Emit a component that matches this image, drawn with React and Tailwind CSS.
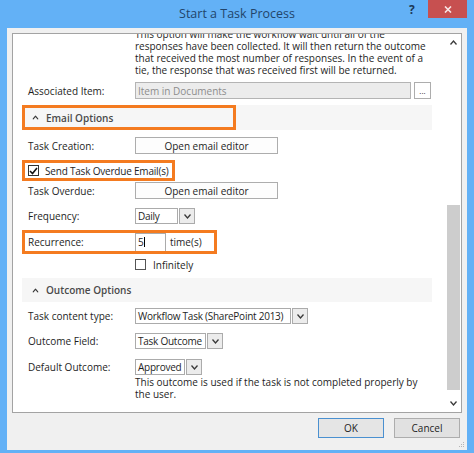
import React from "react";

// Pequeña flecha de los desplegables y de la barra de desplazamiento
const Chevron = ({ up = false, className = "" }) => (
  <svg width="7" height="5" viewBox="0 0 7 5" className={className}>
    <polyline
      points={up ? "0.5,4.5 3.5,1 6.5,4.5" : "0.5,0.5 3.5,4 6.5,0.5"}
      fill="none"
      stroke="#3a3a3a"
      strokeWidth="1.3"
    />
  </svg>
);

const Select = ({ text, width }) => (
  <div className="flex h-[16px]" style={{ width }}>
    <div className="flex-1 border border-[#ababab] bg-white flex items-center pl-[2px] leading-none whitespace-nowrap overflow-hidden tracking-[-0.25px]">
      {text}
    </div>
    <div className="w-[16px] border border-[#ababab] bg-[#ececec] ml-[1px] flex items-center justify-center">
      <Chevron />
    </div>
  </div>
);

const EditorButton = () => (
  <div className="w-[143px] h-[17px] border border-[#adadad] bg-[#fdfdfd] flex items-center justify-center leading-none">
    Open email editor
  </div>
);

const Label = ({ children }) => <div className="w-[107px] shrink-0 leading-none">{children}</div>;

const SectionHeader = ({ title, height, boxed }) => (
  <div className={`relative -ml-[6px] w-[410px] bg-[#f6f6f6] flex items-center pl-[10px] gap-[7px] ${height}`}>
    <Chevron up className="scale-90" />
    <span className="font-semibold text-[#4a4a4a] text-[10px] leading-none">{title}</span>
    {boxed && <div className="absolute inset-y-0 left-0 w-[214px] border-[3px] border-[#f47b20]"></div>}
  </div>
);

export default function App() {
  return (
    <div className="w-[474px] h-[453px] bg-[#63b1f6] flex flex-col font-['Open_Sans',sans-serif] text-[10px] text-[#1e1e1e] overflow-hidden">
      {/* Barra de título */}
      <div className="relative h-[28px] shrink-0 flex items-center justify-center">
        <span className="text-[12.5px] text-[#22456b] leading-none">Start a Task Process</span>
        <span className="absolute left-[409px] top-[4px] text-[12px] font-bold text-[#1c3857] leading-none">?</span>
        <div className="absolute right-[7px] top-0 w-[39px] h-[18px] bg-[#c75050] flex items-center justify-center">
          <svg width="8" height="7" viewBox="0 0 8 7">
            <path d="M1 0.5 L7 6.5 M7 0.5 L1 6.5" stroke="#f8e6e6" strokeWidth="1.6" />
          </svg>
        </div>
      </div>

      {/* Marco */}
      <div className="relative mx-[7px] mb-[3px] flex-1 bg-[#f0f0f0] flex flex-col px-[5px] pt-[5px]">
        <div className="h-[380px] shrink-0 border border-[#a3a3a3] bg-white flex overflow-hidden">
          <div className="flex-1 overflow-hidden pl-[15px]">
            <div className="-mt-[6px] ml-[107px] leading-[12px] w-[300px]">
              <div className="whitespace-nowrap">This option will make the workflow wait until all of the</div>
              <div className="whitespace-nowrap">responses have been collected. It will then return the outcome</div>
              <div className="whitespace-nowrap">that received the most number of responses. In the event of a</div>
              <div className="whitespace-nowrap">tie, the response that was received first will be returned.</div>
            </div>

            <div className="mt-[6px] h-[17px] flex items-center">
              <Label>Associated Item:</Label>
              <div className="w-[276px] h-[17px] border border-[#b4b4b4] bg-[#ececec] text-[#8c8c8c] flex items-center pl-[2px] leading-none">
                Item in Documents
              </div>
              <div className="ml-[3px] w-[17px] h-[17px] border border-[#adadad] bg-white flex items-end justify-center pb-[3px] text-[8px] leading-none">
                ...
              </div>
            </div>

            <div className="mt-[6px]">
              <SectionHeader title="Email Options" height="h-[25px]" boxed />
            </div>

            <div className="mt-[7px] h-[17px] flex items-center">
              <Label>Task Creation:</Label>
              <EditorButton />
            </div>

            <div className="relative mt-[6px] -ml-[6px] w-[153px] h-[21px] flex items-center pl-[6px] gap-[6px]">
              <div className="w-[11px] h-[11px] shrink-0 border border-[#333] bg-white flex items-center justify-center">
                <svg width="9" height="8" viewBox="0 0 9 8">
                  <path d="M1 4 L3.5 6.5 L8 1" fill="none" stroke="#111" strokeWidth="1.6" />
                </svg>
              </div>
              <span className="leading-none whitespace-nowrap tracking-[-0.2px]">Send Task Overdue Email(s)</span>
              <div className="absolute inset-0 border-[3px] border-[#f47b20]"></div>
            </div>

            <div className="mt-[1px] h-[17px] flex items-center">
              <Label>Task Overdue:</Label>
              <EditorButton />
            </div>

            <div className="mt-[9px] h-[16px] flex items-center">
              <Label>Frequency:</Label>
              <Select text="Daily" width={60} />
            </div>

            <div className="relative mt-[6px] -ml-[6px] w-[195px] h-[24px] flex items-center pl-[6px]">
              <Label>Recurrence:</Label>
              <div className="w-[31px] h-[19px] border border-[#ababab] bg-white flex items-center pl-[2px] leading-none">
                5<span className="inline-block w-px h-[10px] bg-black"></span>
              </div>
              <span className="ml-[4px] leading-none">time(s)</span>
              <div className="absolute inset-0 border-[3px] border-[#f47b20]"></div>
            </div>

            <div className="mt-[5px] h-[11px] flex items-center">
              <div className="ml-[107px] w-[11px] h-[11px] border border-[#555] bg-white"></div>
              <span className="ml-[7px] leading-none">Infinitely</span>
            </div>

            <div className="mt-[8px]">
              <SectionHeader title="Outcome Options" height="h-[24px]" />
            </div>

            <div className="mt-[6px] h-[16px] flex items-center">
              <Label>Task content type:</Label>
              <Select text="Workflow Task (SharePoint 2013)" width={173} />
            </div>

            <div className="mt-[9px] h-[16px] flex items-center">
              <Label>Outcome Field:</Label>
              <Select text="Task Outcome" width={88} />
            </div>

            <div className="mt-[10px] h-[16px] flex items-center">
              <Label>Default Outcome:</Label>
              <Select text="Approved" width={67} />
            </div>

            <div className="mt-[1px] ml-[107px] leading-[12px]">
              <div className="whitespace-nowrap">This outcome is used if the task is not completed properly by</div>
              <div>the user.</div>
            </div>
          </div>

          {/* Barra de desplazamiento */}
          <div className="w-[15px] shrink-0 flex flex-col">
            <div className="h-[17px] flex items-center justify-center">
              <Chevron up />
            </div>
            <div className="flex-1">
              <div className="mt-[154px] mx-[1px] h-[185px] bg-[#cdcdcd]"></div>
            </div>
            <div className="h-[17px] flex items-center justify-center">
              <Chevron />
            </div>
          </div>
        </div>

        {/* Botones */}
        <div className="mt-[5px] flex justify-end gap-[10px] pr-[2px]">
          <div className="w-[66px] h-[20px] border border-[#4a90d0] bg-[#e5e5e5] flex items-center justify-center leading-none">
            OK
          </div>
          <div className="w-[66px] h-[20px] border border-[#adadad] bg-[#e1e1e1] flex items-center justify-center leading-none">
            Cancel
          </div>
        </div>

        <svg width="7" height="7" viewBox="0 0 7 7" className="absolute right-[2px] bottom-[2px]">
          <rect x="5" y="1" width="1" height="1" fill="#b5b5b5" />
          <rect x="3" y="3" width="1" height="1" fill="#b5b5b5" />
          <rect x="5" y="3" width="1" height="1" fill="#b5b5b5" />
          <rect x="1" y="5" width="1" height="1" fill="#b5b5b5" />
          <rect x="3" y="5" width="1" height="1" fill="#b5b5b5" />
          <rect x="5" y="5" width="1" height="1" fill="#b5b5b5" />
        </svg>
      </div>
    </div>
  );
}
